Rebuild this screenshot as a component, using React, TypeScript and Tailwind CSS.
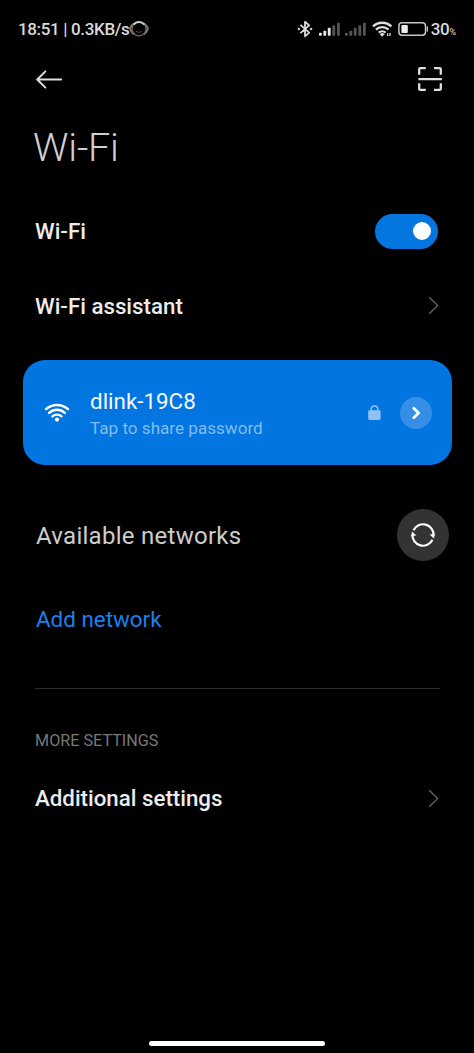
import type { ReactNode } from 'react'
import { clsx } from 'clsx'

const signalBars = [
  { x: 0, h: 3 },
  { x: 4.4, h: 5 },
  { x: 8.8, h: 8 },
  { x: 13.4, h: 10.5 },
  { x: 18, h: 13 },
]

function BluetoothIcon() {
  return (
    <svg width="16" height="18" viewBox="0 0 16 18" fill="none" stroke="#d8d8d8" strokeWidth="1.8">
      <path d="M3.4 4.8 L12.2 12.6 L8 16.2 V1.8 L12.2 5.4 L3.4 13.2" strokeLinejoin="round" />
      <circle cx="1.9" cy="9" r="0.9" fill="#d8d8d8" strokeWidth="0.8" />
      <circle cx="14.1" cy="9" r="0.9" fill="#d8d8d8" strokeWidth="0.8" />
    </svg>
  )
}

function SignalIcon({ active }: { active: number }) {
  return (
    <svg width="21" height="14" viewBox="0 0 21 14">
      {signalBars.map((bar, i) => (
        <rect
          key={bar.x}
          x={bar.x}
          y={13.7 - bar.h}
          width="2.8"
          height={bar.h}
          rx="0.8"
          fill={i < active ? '#ececec' : '#555'}
        />
      ))}
    </svg>
  )
}

function StatusWifiIcon() {
  return (
    <svg width="21" height="16" viewBox="0 0 21 16" fill="none" stroke="#e0e0e0" strokeWidth="2.3">
      <path d="M1 5.4 A13.4 13.4 0 0 1 19.4 5.4" />
      <path d="M3.9 8.7 A9.2 9.2 0 0 1 16.5 8.7" />
      <path d="M6.8 11.7 A5 5 0 0 1 13.6 11.7" />
      <path d="M7.8 13.2 L10.2 15.8 L12.6 13.2 A3.4 3.4 0 0 0 7.8 13.2Z" fill="#e0e0e0" stroke="none" />
      <path d="M15.6 15 V12.2 M18 12 V15" strokeWidth="1.3" />
    </svg>
  )
}

function BatteryIcon() {
  return (
    <svg width="31" height="14" viewBox="0 0 31 14" fill="none">
      <rect x="0.9" y="0.8" width="26.6" height="12.4" rx="3.2" stroke="#c4c4c4" strokeWidth="1.5" />
      <rect x="3.4" y="3.1" width="6.4" height="7.8" rx="1" fill="#ececec" />
      <path d="M29.3 5 V9" stroke="#c4c4c4" strokeWidth="1.4" strokeLinecap="round" />
    </svg>
  )
}

function StatusBadge() {
  return (
    <svg width="20" height="18" viewBox="0 0 20 18" fill="none">
      <path d="M5.2 3.6 Q1.6 6 1.2 8.8 Q2 12 5 14.4 M14.8 3.6 Q18.4 6 18.8 8.8 Q18 12 15 14.4" stroke="#777" strokeWidth="2.2" />
      <circle cx="10" cy="8.8" r="7" stroke="#666" strokeWidth="1.3" />
      <path d="M4.6 4.6 A7 7 0 0 1 15.4 4.6" stroke="#d0d0d0" strokeWidth="2" />
      <path d="M7 11.4 Q10 13.4 13 11.4" stroke="#444" strokeWidth="1" />
    </svg>
  )
}

function BackIcon() {
  return (
    <svg width="27" height="20" viewBox="0 0 27 20" fill="none" stroke="#dedede" strokeWidth="1.9" strokeLinecap="round" strokeLinejoin="round">
      <path d="M25.2 10.5 H1.4 M9.4 2.3 L1.2 10.5 L9.4 18.7" />
    </svg>
  )
}

function ScanIcon() {
  return (
    <svg width="26" height="26" viewBox="0 0 26 26" fill="none" stroke="#dedede" strokeWidth="2.3">
      <path d="M2.2 8.8 V3.2 Q2.2 2.2 3.2 2.2 H8.8 M17 2.2 H22.8 Q23.8 2.2 23.8 3.2 V8.8 M23.8 17.2 V22.8 Q23.8 23.8 22.8 23.8 H17 M8.8 23.8 H3.2 Q2.2 23.8 2.2 22.8 V17.2 M1.4 13.2 H24.8" />
    </svg>
  )
}

function RowChevron() {
  return (
    <svg width="11" height="19" viewBox="0 0 11 19" fill="none" stroke="#5c5c5c" strokeWidth="1.5">
      <path d="M1.2 1.2 L9.6 9.5 L1.2 17.8" />
    </svg>
  )
}

function WifiIcon() {
  return (
    <svg width="26" height="20" viewBox="0 0 26 20" fill="none" stroke="#fff" strokeWidth="2.4" strokeLinecap="round">
      <path d="M2 6.2 A16.4 16.4 0 0 1 24 6.2" />
      <path d="M5.2 9.9 A11.4 11.4 0 0 1 20.8 9.9" />
      <path d="M8.5 13.4 A6.6 6.6 0 0 1 17.5 13.4" />
      <circle cx="13" cy="16.6" r="2.1" fill="#fff" stroke="none" />
    </svg>
  )
}

function LockIcon() {
  return (
    <svg width="13" height="16" viewBox="0 0 13 16" fill="none">
      <path d="M3.2 6.5 V4.4 A3.3 3.3 0 0 1 9.8 4.4 V6.5" stroke="#8fc2f3" strokeWidth="1.5" />
      <rect x="0.2" y="5.2" width="12.4" height="9.8" rx="1.4" fill="#8fc2f3" />
    </svg>
  )
}

function RefreshIcon() {
  return (
    <svg width="26" height="26" viewBox="0 0 26 26" fill="none" stroke="#fff" strokeWidth="2.2">
      <path d="M3.5 8.2 A10.6 10.6 0 0 1 23.6 13.4" />
      <path d="M22.5 17.8 A10.6 10.6 0 0 1 2.4 12.6" />
      <path d="M19.6 12.4 L24.7 12 L24 16.4Z" fill="#fff" stroke="none" />
      <path d="M6.4 13.6 L1.3 14 L2 9.6Z" fill="#fff" stroke="none" />
    </svg>
  )
}

interface SettingRowProps {
  label: string
  className?: string
  children: ReactNode
}

function SettingRow({ label, className, children }: SettingRowProps) {
  return (
    <div className={clsx('flex items-center justify-between pl-[35px]', className)}>
      <span className="pt-[2px] text-[22.3px] font-medium text-[#ececec]">{label}</span>
      {children}
    </div>
  )
}

export default function App() {
  return (
    <div className="flex h-[1053px] w-[474px] flex-col overflow-hidden bg-black font-['Roboto',sans-serif] whitespace-nowrap">
      {/* Status bar */}
      <div className="flex h-[58px] items-center justify-between pr-[18px] pl-[18px] text-[#dadada]">
        <div className="flex items-center">
          <span className="w-[111px] pt-px text-[17px] font-medium tracking-[-0.35px]">18:51 | 0.3KB/s</span>
          <StatusBadge />
        </div>
        <div className="flex items-center">
          <BluetoothIcon />
          <div className="ml-[6px] flex gap-[5px]">
            <SignalIcon active={3} />
            <SignalIcon active={0} />
          </div>
          <div className="ml-[6px]">
            <StatusWifiIcon />
          </div>
          <div className="ml-[5px]">
            <BatteryIcon />
          </div>
          <div className="ml-[2px] flex items-baseline pt-px">
            <span className="text-[17px] font-medium tracking-[-0.3px]">30</span>
            <span className="text-[9px]">%</span>
          </div>
        </div>
      </div>

      {/* Header */}
      <header className="flex h-[42px] items-center justify-between pr-[31px] pl-[36px]">
        <button aria-label="Back">
          <BackIcon />
        </button>
        <button aria-label="Scan QR code">
          <ScanIcon />
        </button>
      </header>
      <h1 className="flex h-[95px] items-center pl-[33px] text-[39.5px] font-light tracking-[-0.2px] text-[#cfcfcf]">Wi-Fi</h1>

      <SettingRow label="Wi-Fi" className="h-[72px] pr-[36px]">
        <button
          role="switch"
          aria-checked="true"
          aria-label="Wi-Fi"
          className="flex h-[35px] w-[63px] items-center justify-end rounded-full bg-[#0575e0] pr-[7px]"
        >
          <span className="size-[18px] rounded-full bg-white" />
        </button>
      </SettingRow>
      <SettingRow label="Wi-Fi assistant" className="h-[77px] pr-[35px]">
        <RowChevron />
      </SettingRow>

      {/* Connected network */}
      <div className="mt-4 mr-[22px] ml-[23px] flex h-[105px] items-center rounded-[22px] bg-[#0275e0] pr-5 pl-[21px]">
        <WifiIcon />
        <div className="ml-5 flex flex-1 flex-col pt-[3px]">
          <span className="text-[22.4px] leading-[28px] text-[#f4f9ff]">dlink-19C8</span>
          <span className="text-[17.1px] leading-[26px] text-[#81bcf2]">Tap to share password</span>
        </div>
        <LockIcon />
        <button aria-label="Network details" className="ml-[19px] flex size-8 items-center justify-center rounded-full bg-[#358fe6]">
          <svg width="10" height="14" viewBox="0 0 10 14" fill="none" stroke="#fff" strokeWidth="2.8" strokeLinecap="round" strokeLinejoin="round">
            <path d="M2.8 2.2 L7.6 7 L2.8 11.8" />
          </svg>
        </button>
      </div>

      {/* Available networks */}
      <div className="flex h-[140px] items-center justify-between pr-[25px] pl-[36px]">
        <h2 className="pt-[2px] text-[24px] tracking-[0.27px] text-[#cdcdcd]">Available networks</h2>
        <button aria-label="Refresh" className="flex size-[52px] items-center justify-center rounded-full bg-[#333]">
          <RefreshIcon />
        </button>
      </div>
      <button className="flex h-7 items-center pt-[2px] pl-[36px] text-[22.4px] text-[#1a80ee]">Add network</button>

      <div className="mt-[55px] mr-[34px] ml-[35px] h-px bg-[#2e2e2e]" />

      {/* More settings */}
      <p className="mt-10 flex h-[22px] items-center pt-[2px] pl-[35px] text-[16.2px] text-[#777]">MORE SETTINGS</p>
      <SettingRow label="Additional settings" className="h-[94px] pr-[35px]">
        <RowChevron />
      </SettingRow>

      <div className="mt-auto mb-[7px] ml-[149px] h-[5px] w-[176px] rounded-full bg-white" />
    </div>
  )
}
